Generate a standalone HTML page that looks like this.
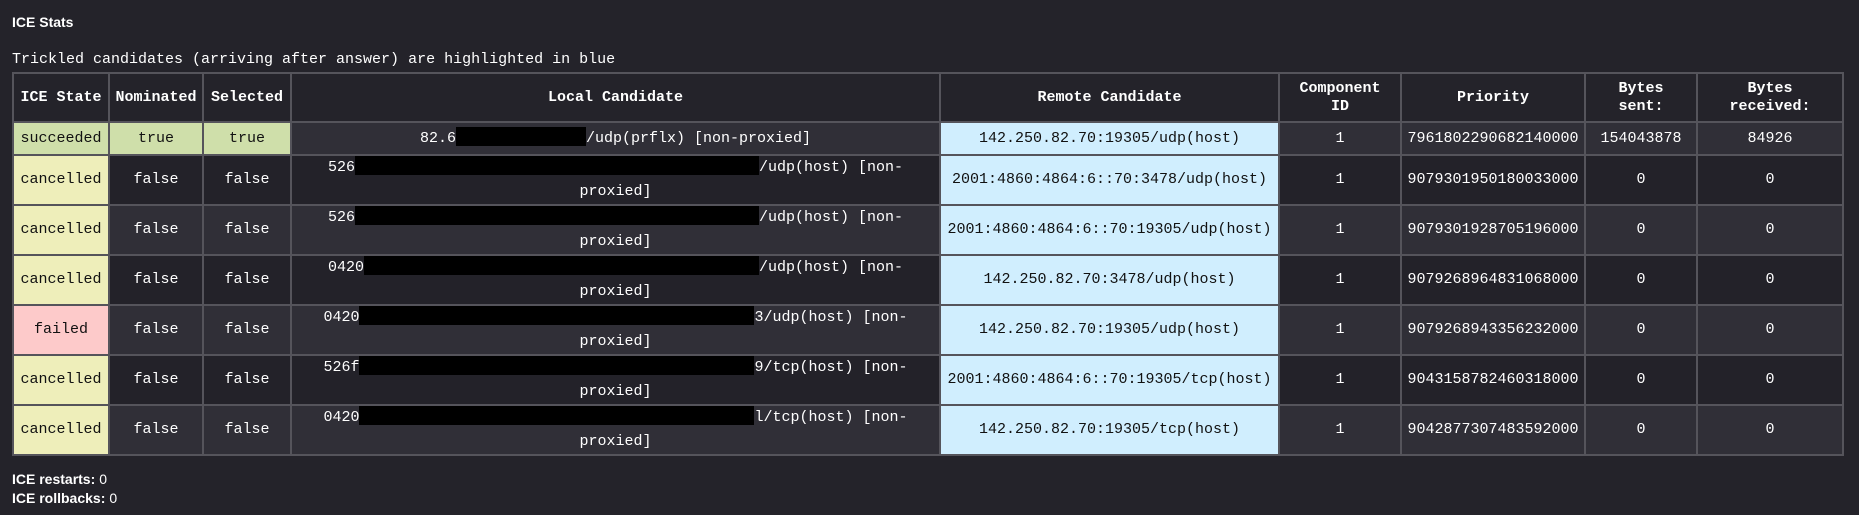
<!DOCTYPE html>
<html><head><meta charset="utf-8">
<style>
html,body{margin:0;padding:0;background:#24232a;width:1859px;height:515px;overflow:hidden;color:#fff}
.t{position:absolute;left:12px;top:14px;font:bold 14px "Liberation Sans",sans-serif}
.s{position:absolute;left:12px;top:51px;font:15px "Liberation Mono",monospace;color:#fff}
table{position:absolute;left:12px;top:72px;border-collapse:collapse;font:15px/24px "Liberation Mono",monospace;color:#fff}
td,th{border:2px solid #55545b;text-align:center;padding:0 4px;box-sizing:border-box}
th{background:#24232a;font-weight:bold;height:49px;line-height:18px}
tr.a td{background:#302f37}
tr.b td{background:#232229}
tr.r1 td{height:33px}
tr.rn td{height:50px}
td.g{background:#cfdfaa!important;color:#111}
td.y{background:#eeeeba!important;color:#111}
td.rd{background:#fdcaca!important;color:#111}
td.bl{background:#d0eefe!important;color:#111}
.k{display:inline-block;background:#000;height:19px;vertical-align:-4px}
.f{position:absolute;left:12px;font:bold 14px "Liberation Sans",sans-serif}
.f span{font-weight:normal;margin-left:4px}
</style></head><body>
<div class="t">ICE Stats</div>
<div class="s">Trickled candidates (arriving after answer) are highlighted in blue</div>
<table>
<colgroup><col style="width:96px"><col style="width:94px"><col style="width:88px"><col style="width:649px"><col style="width:339px"><col style="width:122px"><col style="width:184px"><col style="width:112px"><col style="width:146px"></colgroup>
<tr><th>ICE State</th><th>Nominated</th><th>Selected</th><th>Local Candidate</th><th>Remote Candidate</th><th>Component<br>ID</th><th>Priority</th><th>Bytes<br>sent:</th><th>Bytes<br>received:</th></tr>
<tr class="a r1"><td class="g">succeeded</td><td class="g">true</td><td class="g">true</td><td>82.6<span class="k" style="width:130px"></span>/udp(prflx) [non-proxied]</td><td class="bl">142.250.82.70:19305/udp(host)</td><td>1</td><td>7961802290682140000</td><td>154043878</td><td>84926</td></tr>
<tr class="b rn"><td class="y">cancelled</td><td>false</td><td>false</td><td>526<span class="k" style="width:404px"></span>/udp(host) [non-<br>proxied]</td><td class="bl">2001:4860:4864:6::70:3478/udp(host)</td><td>1</td><td>9079301950180033000</td><td>0</td><td>0</td></tr>
<tr class="a rn"><td class="y">cancelled</td><td>false</td><td>false</td><td>526<span class="k" style="width:404px"></span>/udp(host) [non-<br>proxied]</td><td class="bl">2001:4860:4864:6::70:19305/udp(host)</td><td>1</td><td>9079301928705196000</td><td>0</td><td>0</td></tr>
<tr class="b rn"><td class="y">cancelled</td><td>false</td><td>false</td><td>0420<span class="k" style="width:395px"></span>/udp(host) [non-<br>proxied]</td><td class="bl">142.250.82.70:3478/udp(host)</td><td>1</td><td>9079268964831068000</td><td>0</td><td>0</td></tr>
<tr class="a rn"><td class="rd">failed</td><td>false</td><td>false</td><td>0420<span class="k" style="width:395px"></span>3/udp(host) [non-<br>proxied]</td><td class="bl">142.250.82.70:19305/udp(host)</td><td>1</td><td>9079268943356232000</td><td>0</td><td>0</td></tr>
<tr class="b rn"><td class="y">cancelled</td><td>false</td><td>false</td><td>526f<span class="k" style="width:395px"></span>9/tcp(host) [non-<br>proxied]</td><td class="bl">2001:4860:4864:6::70:19305/tcp(host)</td><td>1</td><td>9043158782460318000</td><td>0</td><td>0</td></tr>
<tr class="a rn"><td class="y">cancelled</td><td>false</td><td>false</td><td>0420<span class="k" style="width:395px"></span>l/tcp(host) [non-<br>proxied]</td><td class="bl">142.250.82.70:19305/tcp(host)</td><td>1</td><td>9042877307483592000</td><td>0</td><td>0</td></tr>
</table>
<div class="f" style="top:471px">ICE restarts:<span>0</span></div>
<div class="f" style="top:490px">ICE rollbacks:<span>0</span></div>
</body></html>
